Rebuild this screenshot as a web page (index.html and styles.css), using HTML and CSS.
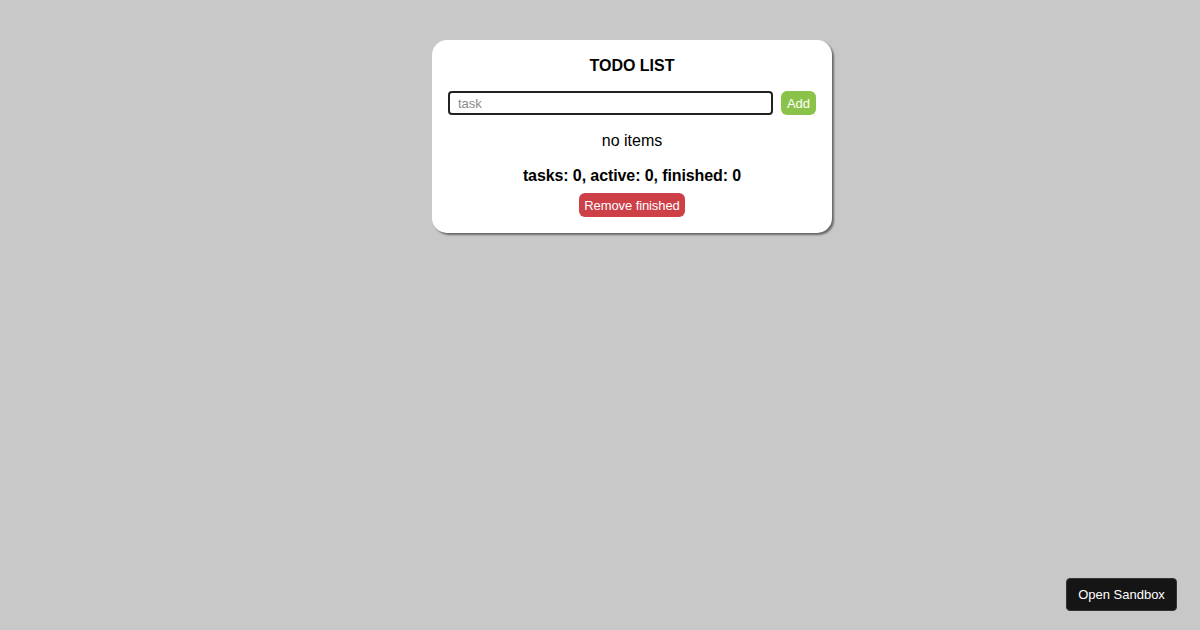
FILE: index.html
```html
<!DOCTYPE html>
<html>
<head>
<meta charset="utf-8">
<link rel="stylesheet" href="styles.css">
</head>
<body>
<div class="page">
  <div class="card">
    <h1 class="title">TODO LIST</h1>
    <div class="form">
      <input class="task-input" type="text" placeholder="task">
      <button class="btn btn-add">Add</button>
    </div>
    <p class="empty">no items</p>
    <p class="stats">tasks: 0, active: 0, finished: 0</p>
    <button class="btn btn-remove">Remove finished</button>
  </div>
</div>
<a class="sandbox">Open Sandbox</a>
</body>
</html>
```
FILE: styles.css
```css
html, body {
  margin: 0;
  padding: 0;
  height: 100%;
}
body {
  background: #c8c8c8;
  font-family: "Liberation Sans", Arial, sans-serif;
  color: #000;
}
.page {
  display: flex;
  justify-content: center;
  padding-top: 40px;
  padding-left: 64px;
}
.card {
  width: 400px;
  box-sizing: border-box;
  background: #fff;
  border-radius: 15px;
  box-shadow: 2px 2px 2px #6a6a6a;
  padding: 17px 16px 16px;
  display: flex;
  flex-direction: column;
  align-items: center;
}
.title {
  margin: 0;
  font-size: 16px;
  line-height: 18px;
  font-weight: bold;
}
.form {
  display: flex;
  gap: 8px;
  width: 100%;
  margin-top: 16px;
}
.task-input {
  flex: 1;
  height: 24px;
  box-sizing: border-box;
  border: 2px solid #222;
  border-radius: 4px;
  padding: 0 8px;
  font-family: "Liberation Sans", Arial, sans-serif;
  font-size: 13px;
  outline: none;
}
.task-input::placeholder {
  color: #8a8a8a;
}
.btn {
  border: none;
  border-radius: 6px;
  color: #fff;
  font-family: "Liberation Sans", Arial, sans-serif;
  font-size: 13px;
  height: 24px;
  padding: 0 6px;
  cursor: pointer;
}
.btn-add {
  background: #8bc34a;
  width: 35px;
  padding: 0;
}
.btn-remove {
  background: #cd4048;
  margin-top: 8px;
  padding: 0 5px;
  letter-spacing: -0.1px;
}
.empty {
  margin: 17px 0 0;
  font-size: 16px;
  line-height: 18px;
}
.stats {
  margin: 17px 0 0;
  font-size: 16px;
  line-height: 18px;
  font-weight: bold;
  letter-spacing: -0.1px;
}
.sandbox {
  position: fixed;
  right: 23px;
  bottom: 19px;
  width: 111px;
  height: 33px;
  box-sizing: border-box;
  display: flex;
  align-items: center;
  justify-content: center;
  background: #151515;
  color: #fff;
  border-radius: 4px;
  font-size: 13px;
  border: 1px solid #333;
}
```
